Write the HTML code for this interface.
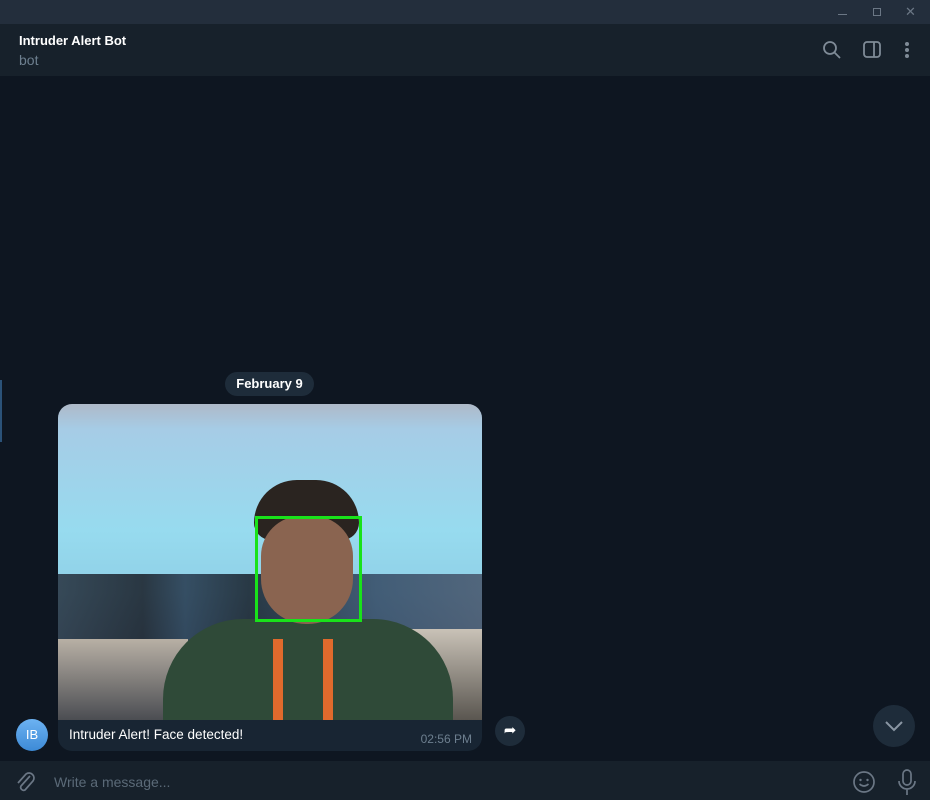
<!DOCTYPE html>
<html><head><style>
*{margin:0;padding:0;box-sizing:border-box}
body{width:930px;height:800px;background:#0e1621;font-family:"Liberation Sans",sans-serif;position:relative;overflow:hidden}
.abs{position:absolute}
</style></head><body>
<div class="abs" style="left:0;top:0;width:930px;height:24px;background:#232e3c"></div>
<div class="abs" style="left:838px;top:14px;width:9px;height:1px;background:#6b7785"></div>
<div class="abs" style="left:873px;top:8px;width:8px;height:8px;border:1px solid #6b7785"></div>
<div class="abs" style="left:905px;top:4px;color:#6b7785;font-size:13px">✕</div>
<div class="abs" style="left:0;top:24px;width:930px;height:52px;background:#17212b"></div>
<div class="abs" style="left:19px;top:33px;color:#fff;font-size:13px;font-weight:bold">Intruder Alert Bot</div>
<div class="abs" style="left:19px;top:52px;color:#6d7f8f;font-size:14px">bot</div>
<svg class="abs" style="left:822px;top:40px" width="20" height="20"><circle cx="8" cy="8" r="6" fill="none" stroke="#7f8b97" stroke-width="1.8"/><line x1="12.5" y1="12.5" x2="18" y2="18" stroke="#7f8b97" stroke-width="1.8"/></svg>
<svg class="abs" style="left:863px;top:41px" width="20" height="18"><rect x="1" y="1" width="16" height="15" rx="3" fill="none" stroke="#7f8b97" stroke-width="1.8"/><line x1="11" y1="1" x2="11" y2="16" stroke="#7f8b97" stroke-width="1.8"/></svg>
<svg class="abs" style="left:903px;top:41px" width="8" height="18"><circle cx="4" cy="3" r="2" fill="#7f8b97"/><circle cx="4" cy="9" r="2" fill="#7f8b97"/><circle cx="4" cy="15" r="2" fill="#7f8b97"/></svg>
<div class="abs" style="left:0;top:380px;width:2px;height:62px;background:#2b5278"></div>
<div class="abs" style="left:225px;top:372px;width:89px;height:24px;border-radius:12px;background:#1e2c3a;color:#fff;font-size:13px;font-weight:bold;text-align:center;line-height:24px">February 9</div>
<div class="abs" style="left:58px;top:404px;width:424px;height:347px;border-radius:14px;background:#182533;overflow:hidden">
 <div class="abs" style="left:0;top:0;width:424px;height:316px;overflow:hidden">
 <div class="abs" style="left:0;top:0;width:424px;height:316px;background:linear-gradient(#aeb9c8 0,#a6cce6 8%,#97dbef 40%,#8fcfe6 60%,#6f8ea8 78%,#3c4a58 100%)"></div>
 <div class="abs" style="left:0;top:170px;width:424px;height:70px;background:linear-gradient(90deg,#2c3a48 0,#1e2630 20%,#2b4055 30%,#1d2833 45%,#39506a 75%,#4a5a70 100%);opacity:.9"></div>
 <div class="abs" style="left:0;top:235px;width:130px;height:81px;background:linear-gradient(#b8b0a5,#4b4d52)"></div>
 <div class="abs" style="left:350px;top:225px;width:74px;height:91px;background:linear-gradient(#c9c2b7,#5a5650)"></div>
 <div class="abs" style="left:105px;top:215px;width:290px;height:120px;border-radius:80px 80px 0 0;background:#2f4a38"></div>
 <div class="abs" style="left:196px;top:76px;width:105px;height:60px;border-radius:50px 50px 20px 20px;background:#2a2420"></div>
 <div class="abs" style="left:203px;top:112px;width:92px;height:108px;border-radius:40px 40px 45px 45px;background:#8a6450"></div>
 <div class="abs" style="left:215px;top:235px;width:10px;height:81px;background:#e06a2c"></div>
 <div class="abs" style="left:265px;top:235px;width:10px;height:81px;background:#e06a2c"></div>
 <div class="abs" style="left:197px;top:112px;width:107px;height:106px;border:3px solid #19e21a"></div>
 </div>
 <div class="abs" style="left:11px;top:323px;color:#fff;font-size:13.5px">Intruder Alert! Face detected!</div>
 <div class="abs" style="right:10px;top:328px;color:#6d7f8f;font-size:12px">02:56 PM</div>
</div>
<div class="abs" style="left:16px;top:719px;width:32px;height:32px;border-radius:50%;background:linear-gradient(#6cb2f2,#3d8ad6);color:#fff;font-size:13px;text-align:center;line-height:32px">IB</div>
<div class="abs" style="left:495px;top:716px;width:30px;height:30px;border-radius:50%;background:#1e2c3a;color:#fff;font-size:15px;text-align:center;line-height:30px">➦</div>
<div class="abs" style="left:873px;top:705px;width:42px;height:42px;border-radius:50%;background:#1e2c3a"></div>
<svg class="abs" style="left:884px;top:719px" width="20" height="14"><polyline points="2,3 10,11 18,3" fill="none" stroke="#8a96a3" stroke-width="2"/></svg>
<div class="abs" style="left:0;top:761px;width:930px;height:39px;background:#17212b"></div>
<svg class="abs" style="left:14px;top:770px" width="22" height="24"><path d="M16 6 L7 16 a3 3 0 0 0 4 4 L19 11 a5 5 0 0 0 -7 -7 L4 13" fill="none" stroke="#6b7785" stroke-width="1.7"/></svg>
<div class="abs" style="left:54px;top:774px;color:#5b6a78;font-size:14px">Write a message...</div>
<svg class="abs" style="left:852px;top:770px" width="24" height="24"><circle cx="12" cy="12" r="10" fill="none" stroke="#6b7785" stroke-width="1.7"/><circle cx="8.5" cy="10" r="1.2" fill="#6b7785"/><circle cx="15.5" cy="10" r="1.2" fill="#6b7785"/><path d="M7.5 14 q4.5 4 9 0" fill="none" stroke="#6b7785" stroke-width="1.6"/></svg>
<svg class="abs" style="left:897px;top:769px" width="20" height="28"><rect x="6" y="1" width="8" height="15" rx="4" fill="none" stroke="#6b7785" stroke-width="1.7"/><path d="M2 12 a8 8 0 0 0 16 0 M10 20 v6" fill="none" stroke="#6b7785" stroke-width="1.7"/></svg>
</body></html>
